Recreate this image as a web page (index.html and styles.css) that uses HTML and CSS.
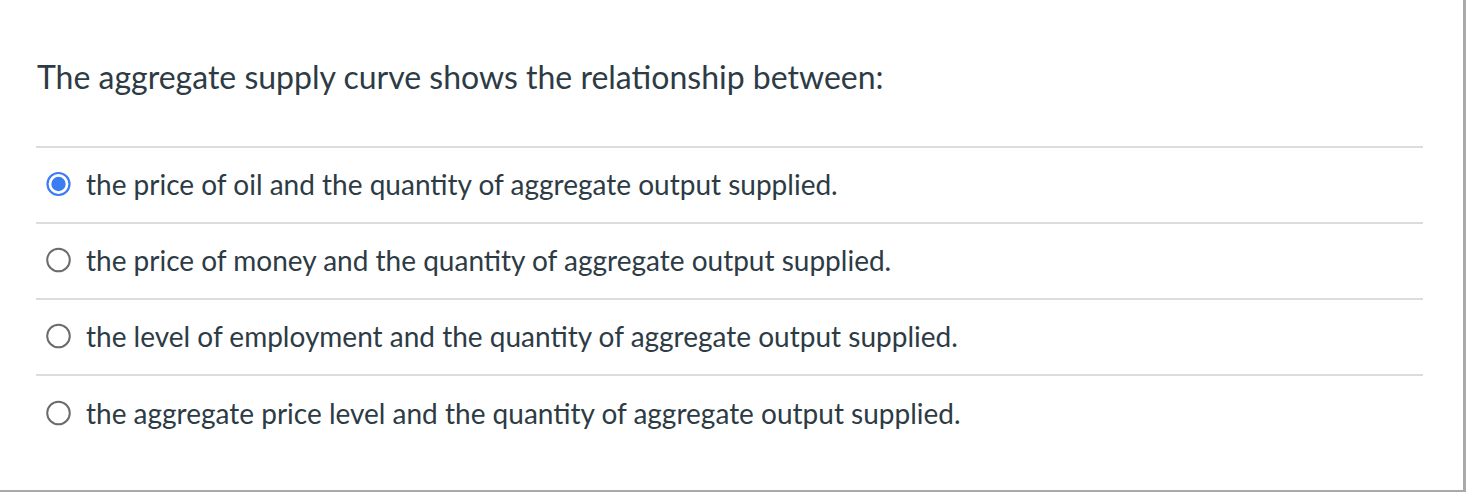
FILE: index.html
```html
<!DOCTYPE html>
<html>
<head>
<meta charset="utf-8">
<link rel="stylesheet" href="styles.css">
</head>
<body>
<div class="quiz">
  <div class="question">The aggregate supply curve shows the relationship between:</div>
  <div class="answers">
    <label class="answer">
      <svg class="radio" width="26" height="26" viewBox="0 0 26 26"><circle cx="13.5" cy="13" r="11" fill="none" stroke="#3a7cf2" stroke-width="2.2"/><circle cx="13.5" cy="13" r="7.2" fill="#3a7cf2"/></svg>
      <span class="text">the price of oil and the quantity of aggregate output supplied.</span>
    </label>
    <label class="answer">
      <svg class="radio" width="26" height="26" viewBox="0 0 26 26"><circle cx="13.5" cy="13" r="11.3" fill="none" stroke="#6b6b6b" stroke-width="2"/></svg>
      <span class="text">the price of money and the quantity of aggregate output supplied.</span>
    </label>
    <label class="answer">
      <svg class="radio" width="26" height="26" viewBox="0 0 26 26"><circle cx="13.5" cy="13" r="11.3" fill="none" stroke="#6b6b6b" stroke-width="2"/></svg>
      <span class="text">the level of employment and the quantity of aggregate output supplied.</span>
    </label>
    <label class="answer">
      <svg class="radio" width="26" height="26" viewBox="0 0 26 26"><circle cx="13.5" cy="13" r="11.3" fill="none" stroke="#6b6b6b" stroke-width="2"/></svg>
      <span class="text">the aggregate price level and the quantity of aggregate output supplied.</span>
    </label>
  </div>
</div>
</body>
</html>
```
FILE: styles.css
```css
html, body {
  margin: 0;
  padding: 0;
  background: #ffffff;
}
.quiz {
  box-sizing: border-box;
  width: 1466px;
  height: 492px;
  border-right: 3px solid #a9a9a9;
  border-bottom: 2px solid #a9a9a9;
  padding: 0 40px 0 36px;
  font-family: Lato, "Noto Sans", sans-serif;
  color: #2d3b45;
}
.question {
  box-sizing: border-box;
  height: 148px;
  padding-top: 56px;
  padding-left: 1px;
  font-size: 32px;
  line-height: 42px;
  border-bottom: 2px solid #dcdcdc;
}
.answers {
  display: flex;
  flex-direction: column;
}
.answer {
  box-sizing: border-box;
  height: 76px;
  display: flex;
  align-items: center;
  gap: 15px;
  padding-left: 9px;
  padding-bottom: 2px;
  font-size: 28px;
  border-bottom: 2px solid #dcdcdc;
}
.answer:last-child {
  border-bottom: none;
}
.radio {
  flex: none;
  display: block;
}
.text {
  line-height: 34px;
}
```
